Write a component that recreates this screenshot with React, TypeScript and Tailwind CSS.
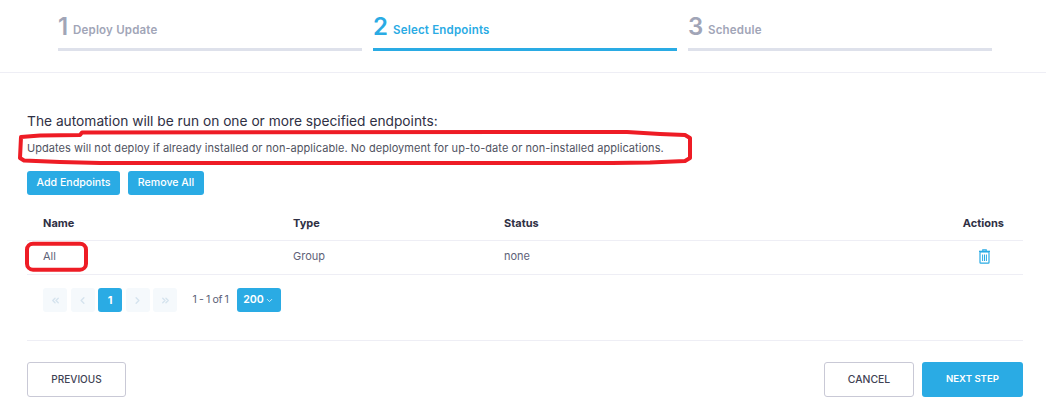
import React from "react";
import { ChevronDown, ChevronLeft, ChevronRight, ChevronsLeft, ChevronsRight } from "lucide-react";

const font = { fontFamily: "Inter, 'Liberation Sans', sans-serif" };

function Step({ n, label, active, w }: { n: string; label: string; active?: boolean; w: string }) {
  return (
    <div className={`w-[304px] h-[51px] border-b-[3px] flex items-start pt-[12px] ${active ? "border-[#2aabe4] text-[#2aabe4]" : "border-[#dee1eb] text-[#a1a5b7]"}`}>
      <span className={`text-[24px] font-semibold leading-[30px] ${w}`}>{n}</span>
      <span className="text-[11.5px] font-semibold leading-[16px] mt-[10px] tracking-[0.2px]">{label}</span>
    </div>
  );
}

function PageBtn({ children, active }: { children: React.ReactNode; active?: boolean }) {
  return (
    <div className={`w-[24px] h-[24px] rounded-[3px] flex items-center justify-center text-[11px] font-bold ${active ? "bg-[#2aabe4] text-white" : "bg-[#f5f9fc] text-[#d5e3ee]"}`}>
      {children}
    </div>
  );
}

export default function App() {
  return (
    <div style={font} className="relative w-[1046px] h-[418px] bg-white overflow-hidden text-[#3f4254]">
      <div className="h-[73px] border-b border-[#eeeef5] pl-[58px] flex gap-[11px] items-start">
        <Step n="1" label="Deploy Update" w="w-[15px]" />
        <Step n="2" label="Select Endpoints" active w="w-[20px]" />
        <Step n="3" label="Schedule" w="w-[20px]" />
      </div>

      <div className="pl-[27px] pr-[23px]">
        <div className="mt-[39px] text-[13.75px] font-normal leading-[18px] text-[#2f3044]">
          The automation will be run on one or more specified endpoints:
        </div>
        <div className="mt-[10px] text-[11px] leading-[16px] tracking-[0.05px] text-[#50535f]">
          Updates will not deploy if already installed or non-applicable. No deployment for up-to-date or non-installed applications.
        </div>
        <div className="mt-[15px] flex gap-[8px]">
          <button className="w-[93px] h-[24px] bg-[#2aabe4] text-white rounded-[3px] text-[10.6px] font-medium">Add Endpoints</button>
          <button className="w-[76px] h-[24px] bg-[#2aabe4] text-white rounded-[3px] text-[10.6px] font-medium">Remove All</button>
        </div>

        <div className="mt-[19px] w-[996px] grid grid-cols-[250px_211px_1fr_60px] pl-[16px] pr-[19px] pt-[1px] h-[27px] items-start border-b border-[#eeeef5] text-[11px] font-bold text-[#2f3044] leading-[16px]">
          <div>Name</div>
          <div>Type</div>
          <div>Status</div>
          <div className="text-right">Actions</div>
        </div>
        <div className="w-[996px] grid grid-cols-[250px_211px_1fr_60px] pl-[16px] pr-[19px] pb-[2px] h-[34px] items-center border-b border-[#eeeef5] text-[11px] text-[#5e6278]">
          <div>All</div>
          <div>Group</div>
          <div>none</div>
          <div className="flex justify-end pr-[14px] pb-[1px]">
            <svg width="11" height="15" viewBox="0 0 11 15" fill="none" stroke="#2aabe4" strokeWidth="1.2">
              <rect x="1" y="3" width="9" height="11.2" rx="0.6" />
              <path d="M0 2.4H11" strokeWidth="1.4" />
              <path d="M3.8 2V0.8H7.2V2" />
              <path d="M3.6 5.5V12M5.5 5.5V12M7.4 5.5V12" strokeWidth="1" />
            </svg>
          </div>
        </div>

        <div className="mt-[13px] ml-[16px] flex items-center h-[24px]">
          <div className="flex gap-[3.5px]">
            <PageBtn><ChevronsLeft size={11} strokeWidth={3} /></PageBtn>
            <PageBtn><ChevronLeft size={11} strokeWidth={3} /></PageBtn>
            <PageBtn active>1</PageBtn>
            <PageBtn><ChevronRight size={11} strokeWidth={3} /></PageBtn>
            <PageBtn><ChevronsRight size={11} strokeWidth={3} /></PageBtn>
          </div>
          <span className="ml-[15.5px] text-[10.6px] tracking-[-0.4px] text-[#5e6278] w-[44px]">1 - 1 of 1</span>
          <div className="w-[44px] h-[24px] bg-[#2aabe4] text-white rounded-[3px] text-[10.6px] font-semibold flex items-center justify-center gap-[1px]">
            200<ChevronDown size={9} />
          </div>
        </div>

        <div className="mt-[28px] w-[996px] border-t border-[#eeeef5] pt-[21px] flex items-start">
          <button className="w-[99px] h-[35px] border border-[#c9c9d6] rounded-[3px] text-[10px] font-medium text-[#3f4254]">PREVIOUS</button>
          <div className="ml-auto flex gap-[8px]">
            <button className="w-[90px] h-[35px] border border-[#c9c9d6] rounded-[3px] text-[10.4px] font-medium text-[#3f4254]">CANCEL</button>
            <button className="w-[101px] h-[35px] bg-[#2aabe4] rounded-[3px] text-[9.6px] font-semibold text-white">NEXT STEP</button>
          </div>
        </div>
      </div>

      <svg className="absolute left-0 top-0" width="1046" height="418" fill="none" stroke="#ee1c25" strokeWidth="4" strokeLinejoin="round">
        <path d="M21 137 L40 135.5 L80 135 L82 132.5 L627 132 L660 134 L685 135 L690 138 L690 158 L685 161 L650 162.5 L612 163 L100 163 L60 162 L24 160.5 L20 158 Z" />
        <rect x="27" y="243.7" width="59" height="26" rx="6" />
      </svg>
    </div>
  );
}
